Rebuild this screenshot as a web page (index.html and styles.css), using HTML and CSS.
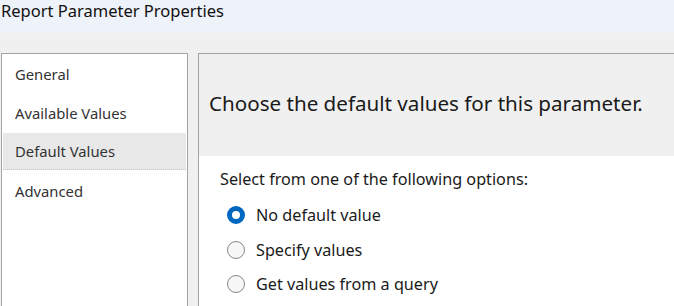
FILE: index.html
```html
<!DOCTYPE html>
<html>
<head>
<meta charset="utf-8">
<link rel="stylesheet" href="styles.css">
</head>
<body>
<div class="titlebar">Report Parameter Properties</div>
<div class="main">
  <div class="nav">
    <div class="nav-item">General</div>
    <div class="nav-item">Available Values</div>
    <div class="nav-item selected">Default Values</div>
    <div class="nav-item">Advanced</div>
  </div>
  <div class="panel">
    <div class="panel-head">Choose the default values for this parameter.</div>
    <div class="panel-body">
      <div class="prompt">Select from one of the following options:</div>
      <label class="radio-row"><span class="radio checked"></span><span>No default value</span></label>
      <label class="radio-row"><span class="radio"></span><span>Specify values</span></label>
      <label class="radio-row"><span class="radio"></span><span>Get values from a query</span></label>
    </div>
  </div>
</div>
</body>
</html>
```
FILE: styles.css
```css
html, body {
  margin: 0;
  padding: 0;
  height: 100%;
  overflow: hidden;
}
body {
  background: #f0f0f0;
  font-family: "Noto Sans", "Open Sans", sans-serif;
  color: #1a1a1a;
}
.titlebar {
  height: 33px;
  box-sizing: border-box;
  background: #eef2f9;
  font-size: 16.5px;
  line-height: 22px;
  padding: 0 0 0 1px;
  color: #111;
}
.main {
  display: flex;
  gap: 10px;
  padding: 20px 0 0 1px;
  height: calc(100% - 33px);
  box-sizing: border-box;
}
.nav {
  width: 187px;
  flex: none;
  box-sizing: border-box;
  background: #fff;
  border: 1px solid #a3a3a3;
  border-bottom: none;
  padding: 1px 1px 0 1px;
  display: flex;
  flex-direction: column;
  gap: 2px;
}
.nav-item {
  height: 37px;
  box-sizing: border-box;
  padding-left: 12px;
  display: flex;
  align-items: center;
  font-size: 14.8px;
  color: #333;
}
.nav-item.selected {
  background: #e8e8e8;
  border-bottom: 1px dotted #c4c4c4;
}
.panel {
  flex: 1;
  border-top: 1px solid #a3a3a3;
  border-left: 1px solid #a3a3a3;
  display: flex;
  flex-direction: column;
}
.panel-head {
  height: 102px;
  box-sizing: border-box;
  padding: 0 0 4px 10px;
  display: flex;
  align-items: center;
  font-size: 20.6px;
  color: #1a1a1a;
}
.panel-body {
  flex: 1;
  background: #fff;
  padding: 13px 0 0 21px;
}
.prompt {
  font-size: 16.2px;
  line-height: 20px;
  margin-bottom: 9px;
}
.radio-row {
  display: flex;
  align-items: center;
  gap: 11px;
  height: 34.5px;
  padding-left: 7px;
  font-size: 16.2px;
}
.radio {
  width: 18px;
  height: 18px;
  box-sizing: border-box;
  border-radius: 50%;
  border: 1px solid #878787;
  background: #f6f6f6;
  flex: none;
}
.radio.checked {
  border: 5px solid #0067c0;
  background: #fff;
}
```
